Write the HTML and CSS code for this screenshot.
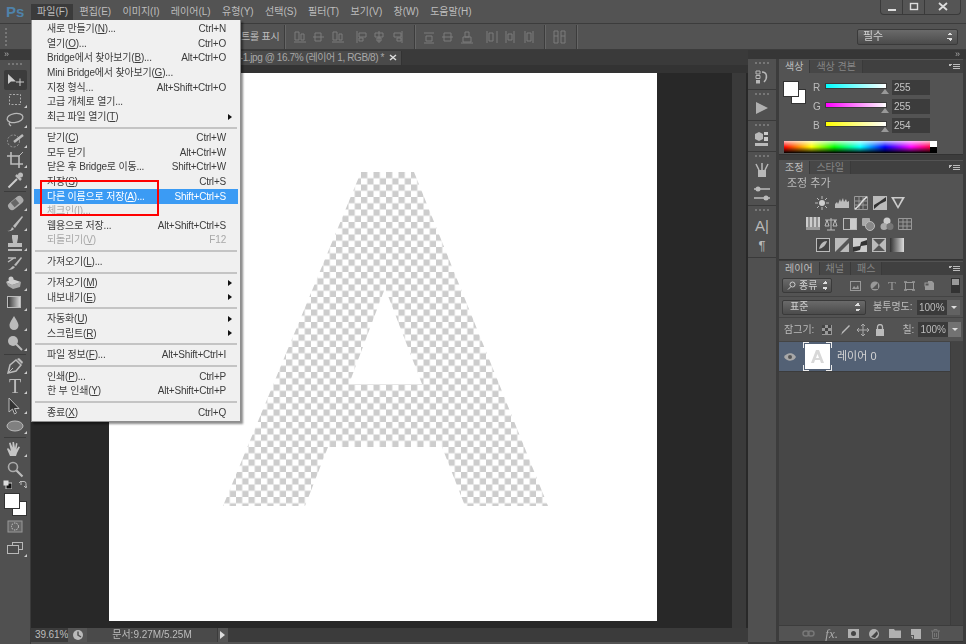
FILE: index.html
```html
<!DOCTYPE html>
<html lang="ko">
<head>
    <meta charset="UTF-8">
    <title>Photoshop - 다른 이름으로 저장</title>
    <link rel="stylesheet" href="styles.css">
</head>
<body>
<div class="app">

    <!-- 메뉴 막대 -->
    <header class="menubar">
        <span class="ps-logo">Ps</span>
        <nav class="menu-titles">
            <span class="menu-title active">파일(F)</span>
            <span class="menu-title">편집(E)</span>
            <span class="menu-title">이미지(I)</span>
            <span class="menu-title">레이어(L)</span>
            <span class="menu-title">유형(Y)</span>
            <span class="menu-title">선택(S)</span>
            <span class="menu-title">필터(T)</span>
            <span class="menu-title">보기(V)</span>
            <span class="menu-title">창(W)</span>
            <span class="menu-title">도움말(H)</span>
        </nav>
        <div class="win-buttons">
            <span class="win-btn min"><svg width="10" height="10"><rect x="1" y="7" width="8" height="2" fill="#ddd"/></svg></span>
            <span class="win-btn max"><svg width="10" height="10"><rect x="1.5" y="1.5" width="7" height="6" fill="none" stroke="#ddd" stroke-width="1.4"/></svg></span>
            <span class="win-btn close"><svg width="10" height="10"><path d="M1 1l8 7M9 1L1 8" stroke="#ddd" stroke-width="1.8"/></svg></span>
        </div>
    </header>

    <!-- 옵션 막대 -->
    <div class="optionsbar">
        <span class="opt-grip"></span>
        <span class="opt-label">트롤 표시</span>
        <span class="opt-sep"></span>
        <svg class="opt-icons" width="286" height="24" viewBox="0 -4 286 24" fill="none" stroke="#7d7d7d">
            <path d="M5 3h4v8H5zM11 5h3v6h-3zM4 13h12"/>
            <path d="M23 8h11M25 4h6v8h-6z"/>
            <path d="M43 3h4v8h-4zM49 5h3v6h-3zM42 13h12"/>
            <path d="M67 2v12M69 4h7v4h-7zM69 9h4v3h-4z"/>
            <path d="M89 2v12M85 4h8v4h-8zM87 9h4v3h-4z"/>
            <path d="M112 2v12M104 4h7v4h-7zM107 9h4v3h-4z"/>
            <path d="M124.500 -4v24" stroke="#3c3c3c"/>
            <path d="M125.500 -4v24" stroke="#666"/>
            <path d="M134 4h10M136 7h6v5h-6zM134 14h10"/>
            <path d="M152 8h11M154 4h7v8h-7z"/>
            <path d="M171 14h12M173 8h8v5h-8zM175 3h4v5h-4z"/>
            <path d="M197 2v12M207 2v12M199 4h4v8h-4z"/>
            <path d="M216 2v12M224 2v12M218 5h4v6h-4z"/>
            <path d="M235 2v12M243 2v12M237 4h4v8h-4z"/>
            <path d="M254.500 -4v24" stroke="#3c3c3c"/>
            <path d="M255.500 -4v24" stroke="#666"/>
            <path d="M264 2h4v12h-4zM271 2h4v12h-4zM264 7h4M271 7h4"/>
        </svg>
        <span class="opt-sep end"></span>
        <div class="select workspace"><span>필수</span><span class="updown"></span></div>
    </div>

    <div class="workspace-area">

        <!-- 도구 상자 -->
        <aside class="toolbar">
            <div class="collapse-strip"><span class="dbl-arrow">»</span></div>
            <div class="grip"></div>
            <div class="tool selected">
                <svg width="20" height="20" viewBox="0 0 20 20"><path d="M3 4v10l3-2.5h5z" fill="#ccc"/><path d="M11 12h8M15 8.500v7.500" stroke="#ccc" fill="none"/></svg>
            </div>
            <div class="tool fly">
                <svg width="20" height="20" viewBox="0 0 20 20"><rect x="4.500" y="4.500" width="11" height="10" fill="none" stroke="#aaa" stroke-dasharray="2 1.500"/></svg>
            </div>
            <div class="tool fly">
                <svg width="20" height="20" viewBox="0 0 20 20" fill="none" stroke="#b8b8b8" stroke-width="1.300"><ellipse cx="10" cy="8" rx="8" ry="4.500" transform="rotate(-10 10 8)"/><path d="M5 12c-2 2 0 3 1 4"/></svg>
            </div>
            <div class="tool fly">
                <svg width="20" height="20" viewBox="0 0 20 20" fill="none"><circle cx="8.500" cy="11" r="6" stroke="#999" stroke-dasharray="2 1.500"/><path d="M9 12L18 5" stroke="#bbb" stroke-width="2.500"/></svg>
            </div>
            <div class="tool fly">
                <svg width="20" height="20" viewBox="0 0 20 20" fill="none" stroke="#bbb" stroke-width="1.600"><path d="M6 2v12h12M2 6h12v12"/><path d="M14 6l4-4" stroke-width="1"/></svg>
            </div>
            <div class="tool fly">
                <svg width="20" height="20" viewBox="0 0 20 20" fill="none"><path d="M3.500 17.500L12 9" stroke="#ccc" stroke-width="2"/><path d="M11 5l5 5" stroke="#bbb" stroke-width="2.500"/><circle cx="15.500" cy="5" r="2.500" fill="#bbb"/></svg>
            </div>
            <div class="tool-sep"></div>
            <div class="tool fly">
                <svg width="20" height="20" viewBox="0 0 20 20"><rect x="2" y="6.500" width="17" height="8" rx="3.500" fill="#aaa" transform="rotate(-40 10 10)"/><rect x="7" y="7" width="6" height="6" fill="#666" transform="rotate(-40 10 10)"/></svg>
            </div>
            <div class="tool fly">
                <svg width="20" height="20" viewBox="0 0 20 20"><path d="M2 18c3 0 4-1 5-4l2 2c-1 1.500-4 2.500-7 2zM8 13L17 3l1 1-8 11z" fill="#bbb"/></svg>
            </div>
            <div class="tool fly">
                <svg width="20" height="20" viewBox="0 0 20 20"><path d="M7 2h6v3l-1 5h5v4H3v-4h5L7 5zM3 16h14v2H3z" fill="#bbb"/></svg>
            </div>
            <div class="tool fly">
                <svg width="20" height="20" viewBox="0 0 20 20"><path d="M3 17c3-1 3-3 5-4l2 1c-1 2-4 3-7 3zM9 12l7-8 1 1-6 8z" fill="#bbb"/><path d="M3 5h8M3 9l6-4" stroke="#bbb" stroke-width="1.500" fill="none"/></svg>
            </div>
            <div class="tool fly">
                <svg width="20" height="20" viewBox="0 0 20 20"><path d="M1 9l6 3 9-3-1 5-7 2-5-3z" fill="#aaa"/><path d="M7 6l9 3-9 3-6-3z" fill="#d0d0d0"/><circle cx="6" cy="6" r="2.500" fill="#ccc"/></svg>
            </div>
            <div class="tool fly">
                <svg width="20" height="20" viewBox="0 0 20 20"><defs><linearGradient id="grad-tool"><stop offset="0" stop-color="#333"/><stop offset="1" stop-color="#ddd"/></linearGradient></defs><rect x="2.500" y="3.500" width="13" height="11" fill="url(#grad-tool)" stroke="#bbb"/></svg>
            </div>
            <div class="tool fly">
                <svg width="20" height="20" viewBox="0 0 20 20"><path d="M9 3C6 8 4.500 10 4.500 12.500a4.500 4.500 0 0 0 9 0C13.500 10 12 8 9 3z" fill="#bbb"/></svg>
            </div>
            <div class="tool fly">
                <svg width="20" height="20" viewBox="0 0 20 20" fill="none"><circle cx="8" cy="8" r="5" fill="#bbb"/><path d="M11 11l6 6" stroke="#bbb" stroke-width="2"/></svg>
            </div>
            <div class="tool-sep"></div>
            <div class="tool fly">
                <svg width="20" height="20" viewBox="0 0 20 20"><path d="M3 17l2-8 6-5 5 5-5 6z" fill="none" stroke="#bbb" stroke-width="1.500"/><path d="M3 17l5-5" stroke="#bbb"/><path d="M12 3l2-1 4 4-1 2z" fill="#bbb"/></svg>
            </div>
            <div class="tool fly"><span class="type-t">T</span></div>
            <div class="tool fly">
                <svg width="20" height="20" viewBox="0 0 20 20"><path d="M4 2v14l3.500-3 2 5 2-1-2-4.500H14z" fill="#333" stroke="#bbb"/></svg>
            </div>
            <div class="tool fly">
                <svg width="20" height="20" viewBox="0 0 20 20"><ellipse cx="10" cy="10" rx="8" ry="5" fill="#808080" stroke="#bbb"/></svg>
            </div>
            <div class="tool-sep"></div>
            <div class="tool fly">
                <svg width="20" height="20" viewBox="0 0 20 20"><path d="M5 17L2 10l1-1 3 3-2-8 1.500-.5 2 5V3h1.500l1 6 1-5 1.500.5-1 6 2-3 1.500.5-3 6-1 3z" fill="#c4c4c4"/></svg>
            </div>
            <div class="tool">
                <svg width="20" height="20" viewBox="0 0 20 20" fill="none"><circle cx="8" cy="8" r="4.500" stroke="#aaa" stroke-width="1.600"/><path d="M11.500 11.500l6 6" stroke="#bbb" stroke-width="2.200"/></svg>
            </div>
            <div class="color-mini">
                <svg width="9" height="9"><rect x="3" y="3" width="6" height="6" fill="#111" stroke="#ccc"/><rect x=".5" y=".5" width="5" height="5" fill="#ddd"/></svg>
                <svg width="9" height="9" fill="none" stroke="#bbb"><path d="M1 3l2-2v4M3 1.500h3a2 2 0 0 1 2 2V7M6 6l2 2 1-2"/></svg>
            </div>
            <div class="fg-bg">
                <span class="swatch-bg"></span>
                <span class="swatch-fg"></span>
            </div>
            <div class="tool quick-mask">
                <svg width="20" height="20" viewBox="0 0 20 20" fill="none"><rect x="3" y="4" width="14" height="11" fill="#666" stroke="#999"/><circle cx="10" cy="9.500" r="3.500" stroke="#ccc" stroke-dasharray="1.500 1"/></svg>
            </div>
            <div class="tool fly screen-mode">
                <svg width="20" height="20" viewBox="0 0 20 20" fill="none" stroke="#b8b8b8"><rect x="7.500" y="3.500" width="10" height="7"/><rect x="2.500" y="6.500" width="11" height="8" fill="#4c4c4c"/></svg>
            </div>
        </aside>

        <!-- 문서 영역 -->
        <main class="docarea">
            <div class="tabbar">
                <div class="doc-tab">
                    <span>-1.jpg @ 16.7% (레이어 1, RGB/8) *</span>
                    <svg width="8" height="8"><path d="M1 1l6 5M7 1L1 6" stroke="#ddd" stroke-width="1.500"/></svg>
                </div>
            </div>
            <div class="tab-shade"></div>
            <div class="doc-view">
                <div class="canvas">
                    <svg class="letter" width="548" height="548" viewBox="0 0 548 548">
                        <defs>
                            <pattern id="transparent-grid" x="252" y="99" width="12.500" height="12.500" patternUnits="userSpaceOnUse">
                                <rect width="12.500" height="12.500" fill="#fff"/>
                                <rect width="6.250" height="6.250" fill="#cdcdcd"/>
                                <rect x="6.250" y="6.250" width="6.250" height="6.250" fill="#cdcdcd"/>
                            </pattern>
                        </defs>
                        <path fill="url(#transparent-grid)" fill-rule="evenodd" d="M252 99H305L439 433H356L333 374H219L196 433H114ZM276 215L240 311H313Z"/>
                    </svg>
                </div>
                <div class="v-scroll"></div>
            </div>
            <footer class="statusbar">
                <span class="zoom-field">39.61%</span>
                <span class="status-icon"><svg width="12" height="12"><circle cx="6" cy="6" r="5" fill="#bbb"/><path d="M6 2.500V6l3 2" stroke="#555" fill="none" stroke-width="1.500"/></svg></span>
                <span class="doc-size">문서:9.27M/5.25M</span>
                <span class="status-arrow"></span>
            </footer>
        </main>

        <!-- 패널 아이콘 도크 -->
        <div class="dock">
            <div class="dock-strip"></div>
            <div class="dock-group">
                <svg width="16" height="16" viewBox="0 0 16 16"><path d="M2 2h4v3H2zM2 6.500h4v3H2z" fill="none" stroke="#b8b8b8"/><rect x="2" y="11" width="4" height="3.500" fill="#b8b8b8"/><path d="M8 3c5 0 6 6 2 10" fill="none" stroke="#b8b8b8" stroke-width="1.500"/></svg>
            </div>
            <div class="dock-group">
                <svg width="16" height="16" viewBox="0 0 16 16"><path d="M2 2l12 6-12 6z" fill="#b0b0b0"/></svg>
            </div>
            <div class="dock-group">
                <svg width="16" height="16" viewBox="0 0 16 16"><path d="M1 3l4-2 4 2v5l-4 2-4-2z" fill="#b8b8b8"/><rect x="10" y="1" width="4" height="3" fill="#ccc"/><rect x="10" y="6" width="4" height="4" fill="#ccc"/><rect x="1" y="12" width="13" height="3" fill="#bbb"/></svg>
            </div>
            <div class="dock-group tall">
                <svg width="16" height="16" viewBox="0 0 16 16"><path d="M4 8h8v7H4z" fill="#b8b8b8"/><path d="M5 8L2 2M8 8V1M11 8l3-6" stroke="#b8b8b8" stroke-width="1.500"/></svg>
                <svg width="18" height="16" viewBox="0 0 18 16"><path d="M1 3h16M1 12h16" stroke="#bbb" stroke-width="1.500"/><circle cx="5" cy="3" r="2.500" fill="#bbb"/><circle cx="13" cy="12" r="2.500" fill="#bbb"/></svg>
            </div>
            <div class="dock-group tall text-tools">
                <span class="dock-a">A|</span>
                <span class="dock-para">¶</span>
            </div>
            <div class="dock-rest"></div>
        </div>

        <!-- 패널 -->
        <div class="panels">
            <div class="dock-strip right"><span class="dbl-arrow">»</span></div>

            <section class="panel color-panel">
                <div class="tabs">
                    <span class="tab active">색상</span>
                    <span class="tab">색상 견본</span>
                    <span class="panel-menu"></span>
                </div>
                <div class="color-body">
                    <div class="fg-bg small">
                        <span class="swatch-bg"></span>
                        <span class="swatch-fg"></span>
                    </div>
                    <div class="sliders">
                        <div class="slider-row"><label>R</label><span class="ramp red"></span><span class="field">255</span></div>
                        <div class="slider-row"><label>G</label><span class="ramp green"></span><span class="field">255</span></div>
                        <div class="slider-row"><label>B</label><span class="ramp blue"></span><span class="field">254</span></div>
                    </div>
                </div>
                <div class="spectrum"><span class="spec-ends"></span></div>
            </section>

            <section class="panel adjust-panel">
                <div class="tabs">
                    <span class="tab active">조정</span>
                    <span class="tab">스타일</span>
                    <span class="panel-menu"></span>
                </div>
                <p class="adjust-title">조정 추가</p>
                <div class="adjust-row">
                    <svg width="14" height="14" viewBox="0 0 14 14"><circle cx="7" cy="7" r="3" fill="#ccc"/><path d="M7 0v3M7 11v3M0 7h3M11 7h3M2 2l2 2M10 10l2 2M12 2l-2 2M4 10l-2 2" stroke="#bbb"/></svg>
                    <svg width="16" height="14" viewBox="0 0 16 14"><path d="M1 12V8l2-2 1 2 2-5 1 3 2-4 1 4 2-3 1 3 2-1v7z" fill="#bbb"/></svg>
                    <svg width="14" height="14" viewBox="0 0 14 14" fill="none" stroke="#999"><path d="M.5.500h13v13H.5zM.5 5h13M.5 9h13M5 .5v13M9 .5v13"/><path d="M1 13C5 11 9 3 13 1" stroke="#ddd" stroke-width="1.500"/></svg>
                    <svg width="14" height="14" viewBox="0 0 14 14"><rect width="14" height="14" fill="#bbb"/><path d="M1 13V9l5-3 7-5v4l-6 3z" fill="#333"/></svg>
                    <svg width="14" height="14" viewBox="0 0 14 14"><path d="M0 1h14L7 13z" fill="#ccc"/><path d="M3 2.500h8L7 10z" fill="#555"/></svg>
                </div>
                <div class="adjust-row wide">
                    <svg width="14" height="14" viewBox="0 0 14 14"><rect width="14" height="10" fill="#ccc"/><path d="M3 0v10M7 0v10M11 0v10" stroke="#555"/><rect y="10" width="14" height="3" fill="#999"/></svg>
                    <svg width="14" height="14" viewBox="0 0 14 14" fill="none" stroke="#bbb"><path d="M7 1v12M3 13h8M1 3h12M3 3L1 9h4zM11 3L9 9h4z"/></svg>
                    <svg width="14" height="14" viewBox="0 0 14 14"><rect x=".5" y="1.500" width="13" height="11" fill="#555" stroke="#bbb"/><rect x="7" y="2" width="6" height="10" fill="#ccc"/></svg>
                    <svg width="14" height="14" viewBox="0 0 14 14"><rect x="1" y="1" width="8" height="8" rx="1" fill="#aaa"/><circle cx="9" cy="9" r="4.500" fill="#888" stroke="#bbb"/></svg>
                    <svg width="14" height="14" viewBox="0 0 14 14"><circle cx="7" cy="4" r="3.500" fill="#ccc"/><circle cx="4" cy="9.500" r="3.500" fill="#aaa"/><circle cx="10" cy="9.500" r="3.500" fill="#777"/></svg>
                    <svg width="14" height="14" viewBox="0 0 14 14" fill="none" stroke="#999"><path d="M.5 1.500h13v11H.5zM.5 5h13M.5 9h13M5 1.500v11M9 1.500v11"/></svg>
                </div>
                <div class="adjust-row">
                    <svg width="14" height="14" viewBox="0 0 14 14"><rect x=".5" y=".5" width="13" height="13" fill="#444" stroke="#bbb"/><path d="M3 11c1-5 4-8 8-8-1 4-4 7-8 8z" fill="#bbb"/></svg>
                    <svg width="14" height="14" viewBox="0 0 14 14"><rect width="14" height="14" fill="#bbb"/><path d="M0 14L14 0v5L5 14z" fill="#555"/></svg>
                    <svg width="14" height="14" viewBox="0 0 14 14"><rect width="14" height="14" fill="#ccc"/><path d="M0 14V9l7-1 1-4 6-2v5l-6 1-1 4z" fill="#333"/></svg>
                    <svg width="14" height="14" viewBox="0 0 14 14"><rect width="14" height="14" fill="#bbb"/><path d="M1 1h12L7 7zM1 13h12L7 7z" fill="#555"/></svg>
                    <svg width="14" height="14" viewBox="0 0 14 14"><defs><linearGradient id="grad-map"><stop offset="0" stop-color="#333"/><stop offset="1" stop-color="#ddd"/></linearGradient></defs><rect width="14" height="14" fill="url(#grad-map)"/></svg>
                </div>
            </section>

            <section class="panel layers-panel">
                <div class="tabs">
                    <span class="tab active">레이어</span>
                    <span class="tab">채널</span>
                    <span class="tab">패스</span>
                    <span class="panel-menu"></span>
                </div>
                <div class="layer-row filter-row">
                    <div class="select kind">
                        <svg width="9" height="9" fill="none" stroke="#ccc"><circle cx="5.500" cy="3.500" r="2.500"/><path d="M4 5.500L1 8.500"/></svg>
                        <span>종류</span><span class="updown"></span>
                    </div>
                    <div class="filter-icons">
                        <svg width="11" height="10"><rect x=".5" y=".5" width="10" height="9" fill="none" stroke="#999"/><path d="M2 8l2-3 2 2 2-3 1 4z" fill="#999"/></svg>
                        <svg width="10" height="10"><circle cx="5" cy="5" r="4.500" fill="#999"/><path d="M2 8L8 2v6z" fill="#555"/></svg>
                        <span class="filter-t">T</span>
                        <svg width="11" height="10" fill="none" stroke="#999"><path d="M1.500 1.500h8v7h-8z"/><path d="M0 1h3M8 1h3M0 9h3M8 9h3" stroke-width="1.500"/></svg>
                        <svg width="11" height="11"><path d="M4 1h4l2 2v7H1V5h3z" fill="#999"/><rect x="1" y="3" width="4" height="3" fill="#555" stroke="#999"/></svg>
                    </div>
                    <span class="filter-toggle"></span>
                </div>
                <div class="layer-row blend-row">
                    <div class="select blend"><span>표준</span><span class="updown"></span></div>
                    <label>불투명도:</label>
                    <span class="percent">100%</span><span class="percent-btn"></span>
                </div>
                <div class="layer-row lock-row">
                    <label>잠그기:</label>
                    <div class="lock-icons">
                        <svg width="10" height="10"><rect width="10" height="10" fill="#999"/><path d="M0 0h3v3H0zM6 0h3v3H6zM3 3h3v3H3zM0 6h3v3H0zM6 6h3v3H6z" fill="#444"/></svg>
                        <svg width="13" height="12"><path d="M1 11c2 0 3-1 3-3l7-7 1 1-7 7c-1 1-2 2-4 2z" fill="#bbb"/></svg>
                        <svg width="12" height="12" stroke="#aaa" fill="none"><path d="M6 0v12M0 6h12M4 2l2-2 2 2M4 10l2 2 2-2M2 4L0 6l2 2M10 4l2 2-2 2"/></svg>
                        <svg width="10" height="12"><rect x="1" y="5" width="8" height="7" fill="#bbb"/><path d="M2.500 5V3a2.500 2.500 0 0 1 5 0v2" fill="none" stroke="#bbb" stroke-width="1.300"/></svg>
                    </div>
                    <label class="fill-label">칠:</label>
                    <span class="percent">100%</span><span class="percent-btn light"></span>
                </div>
                <div class="layer-list">
                    <div class="layer-rows">
                        <div class="layer-item">
                            <svg class="eye" width="12" height="8" viewBox="0 0 12 8"><path d="M0 4c3-5 9-5 12 0-3 5-9 5-12 0z" fill="#a8a8a8"/><circle cx="6" cy="4" r="2" fill="#555"/></svg>
                            <div class="thumb">
                                <svg width="25" height="25" viewBox="0 0 25 25"><path d="M11 6h3l5 13h-3l-1-3h-5l-1 3H6zM12.500 10l-1.500 4h3z" fill="#d8d8d8" fill-rule="evenodd"/></svg>
                            </div>
                            <span class="layer-name">레이어 0</span>
                        </div>
                    </div>
                    <div class="layer-gutter"></div>
                </div>
                <div class="panel-footer">
                    <svg width="13" height="7" fill="none" stroke="#777" stroke-width="1.500"><rect x="1" y="1" width="6" height="5" rx="2.500"/><rect x="6" y="1" width="6" height="5" rx="2.500"/></svg>
                    <span class="fx">fx.</span>
                    <svg width="11" height="9"><rect width="11" height="9" fill="#b0b0b0"/><circle cx="5.500" cy="4.500" r="2.500" fill="#444"/></svg>
                    <svg width="10" height="10"><circle cx="5" cy="5" r="5" fill="#b0b0b0"/><path d="M2 8L8 2l1 3-3 4z" fill="#444"/></svg>
                    <svg width="12" height="9"><path d="M0 0h5l1 1.500h6V9H0z" fill="#b0b0b0"/></svg>
                    <svg width="10" height="10"><path d="M0 0h10v10H3V6H0z" fill="#b0b0b0"/><path d="M0 7h2v3z" fill="#b0b0b0"/></svg>
                    <svg width="9" height="10" fill="none" stroke="#777"><path d="M0 2h9M3 2V.5h3V2M1.500 2v7.500h6V2M3.500 4v4M5.500 4v4"/></svg>
                </div>
            </section>
        </div>
    </div>
</div>

<!-- 파일 메뉴 -->
<div class="file-menu">
    <div class="menu-group">
        <div class="mi"><span>새로 만들기(<u>N</u>)...</span><span>Ctrl+N</span></div>
        <div class="mi"><span>열기(<u>O</u>)...</span><span>Ctrl+O</span></div>
        <div class="mi"><span>Bridge에서 찾아보기(<u>B</u>)...</span><span>Alt+Ctrl+O</span></div>
        <div class="mi"><span>Mini Bridge에서 찾아보기(<u>G</u>)...</span></div>
        <div class="mi"><span>지정 형식...</span><span>Alt+Shift+Ctrl+O</span></div>
        <div class="mi"><span>고급 개체로 열기...</span></div>
        <div class="mi sub"><span>최근 파일 열기(<u>T</u>)</span></div>
    </div>
    <div class="menu-group">
        <div class="mi"><span>닫기(<u>C</u>)</span><span>Ctrl+W</span></div>
        <div class="mi"><span>모두 닫기</span><span>Alt+Ctrl+W</span></div>
        <div class="mi"><span>닫은 후 Bridge로 이동...</span><span>Shift+Ctrl+W</span></div>
        <div class="mi"><span>저장(<u>S</u>)</span><span>Ctrl+S</span></div>
        <div class="mi hot"><span>다른 이름으로 저장(<u>A</u>)...</span><span>Shift+Ctrl+S</span></div>
        <div class="mi off"><span>체크인(<u>I</u>)...</span></div>
        <div class="mi"><span>웹용으로 저장...</span><span>Alt+Shift+Ctrl+S</span></div>
        <div class="mi off"><span>되돌리기(<u>V</u>)</span><span>F12</span></div>
    </div>
    <div class="menu-group">
        <div class="mi"><span>가져오기(<u>L</u>)...</span></div>
    </div>
    <div class="menu-group">
        <div class="mi sub"><span>가져오기(<u>M</u>)</span></div>
        <div class="mi sub"><span>내보내기(<u>E</u>)</span></div>
    </div>
    <div class="menu-group">
        <div class="mi sub"><span>자동화(<u>U</u>)</span></div>
        <div class="mi sub"><span>스크립트(<u>R</u>)</span></div>
    </div>
    <div class="menu-group">
        <div class="mi"><span>파일 정보(<u>F</u>)...</span><span>Alt+Shift+Ctrl+I</span></div>
    </div>
    <div class="menu-group">
        <div class="mi"><span>인쇄(<u>P</u>)...</span><span>Ctrl+P</span></div>
        <div class="mi"><span>한 부 인쇄(<u>Y</u>)</span><span>Alt+Shift+Ctrl+P</span></div>
    </div>
    <div class="menu-group">
        <div class="mi"><span>종료(<u>X</u>)</span><span>Ctrl+Q</span></div>
    </div>
</div>

<!-- 빨간 강조 상자 -->
<div class="red-box"></div>

</body>
</html>
```

FILE: styles.css
```css
/* 전체 */
html, body {
    margin: 0;
    padding: 0;
}
body {
    position: relative;
    width: 966px;
    height: 644px;
    overflow: hidden;
    background: #535353;
    color: #bdbdbd;
    font-family: "Liberation Sans", "Noto Sans CJK KR", sans-serif;
    font-size: 10px;
    line-height: 1;
    filter: blur(.35px);
}
.app {
    display: flex;
    flex-direction: column;
    height: 100%;
}

/* 메뉴 막대 */
.menubar {
    display: flex;
    align-items: flex-start;
    height: 23px;
    background: #535353;
    border-bottom: 1px solid #3c3c3c;
}
.ps-logo {
    width: 31px;
    padding: 4px 0 0 6px;
    box-sizing: border-box;
    color: #4f82aa;
    font-family: "Liberation Sans", sans-serif;
    font-size: 15px;
    font-weight: bold;
}
.menu-titles {
    display: flex;
    padding-top: 4px;
}
.menu-title {
    height: 16px;
    padding: 3px 5.300px 0 6px;
    box-sizing: border-box;
    white-space: nowrap;
}
.menu-title.active {
    background: #3b3b3b;
}
.win-buttons {
    display: flex;
    margin-left: auto;
    margin-right: 5px;
    height: 14px;
    background: #555;
    border: 1px solid #3a3a3a;
    border-top: 0;
    border-radius: 0 0 4px 4px;
}
.win-btn {
    display: flex;
    align-items: center;
    justify-content: center;
    border-right: 1px solid #3a3a3a;
}
.win-btn.min, .win-btn.max { width: 21px; }
.win-btn.close { width: 35px; border-right: 0; }

/* 옵션 막대 */
.optionsbar {
    display: flex;
    align-items: center;
    height: 26px;
    background: #535353;
    border-bottom: 1px solid #3c3c3c;
    box-sizing: border-box;
    padding-right: 8px;
}
.opt-grip {
    width: 2px;
    height: 18px;
    margin-left: 5px;
    border-left: 2px dotted #777;
}
.opt-label {
    margin-left: 232px;
    width: 34px;
    letter-spacing: -.2px;
    white-space: nowrap;
}
.opt-sep {
    width: 1px;
    height: 24px;
    margin-left: 9px;
    background: #3c3c3c;
    border-right: 1px solid #666;
}
.opt-icons {
    margin-left: 4px;
    flex-shrink: 0;
}
.opt-sep.end {
    margin-left: 0;
}
.select {
    display: flex;
    align-items: center;
    box-sizing: border-box;
    background: linear-gradient(#6a6a6a, #4b4b4b);
    border: 1px solid #3a3a3a;
    border-radius: 2px;
    color: #d0d0d0;
}
.select.workspace {
    width: 101px;
    height: 16px;
    margin-left: auto;
    padding: 0 5px;
    font-size: 11px;
}
.updown {
    position: relative;
    width: 5px;
    height: 9px;
    margin-left: auto;
    background:
        linear-gradient(135deg, transparent 50%, #ddd 50%) 0 0 / 3px 3px no-repeat,
        linear-gradient(225deg, transparent 50%, #ddd 50%) 2.5px 0 / 3px 3px no-repeat,
        linear-gradient(45deg, transparent 50%, #ddd 50%) 0 6px / 3px 3px no-repeat,
        linear-gradient(315deg, transparent 50%, #ddd 50%) 2.5px 6px / 3px 3px no-repeat;
}

/* 본문 배치 */
.workspace-area {
    display: flex;
    flex: 1;
    min-height: 0;
}

/* 도구 상자 */
.toolbar {
    display: flex;
    flex-direction: column;
    align-items: center;
    width: 31px;
    flex-shrink: 0;
    background: #505050;
    border-right: 1px solid #3a3a3a;
    box-sizing: border-box;
}
.collapse-strip {
    align-self: stretch;
    height: 10px;
    background: #3a3a3a;
    padding-left: 4px;
}
.dbl-arrow {
    display: block;
    color: #aaa;
    font-size: 9px;
    line-height: 8px;
}
.grip {
    width: 14px;
    height: 2px;
    margin: 3px 0 5px;
    border-top: 2px dotted #777;
    box-sizing: border-box;
}
.tool {
    position: relative;
    display: flex;
    align-items: center;
    justify-content: center;
    width: 23px;
    height: 20px;
}
.tool.selected {
    background: #3c3c3c;
    border-radius: 2px;
}
.tool.fly::after {
    content: "";
    position: absolute;
    right: 0;
    bottom: 2px;
    border-left: 3px solid transparent;
    border-bottom: 3px solid #ccc;
}
.tool-sep {
    width: 22px;
    height: 1px;
    margin: 1px 0;
    background: #3c3c3c;
    flex-shrink: 0;
}
.type-t {
    font-family: "Liberation Serif", serif;
    font-size: 20px;
    color: #bbb;
}
.color-mini {
    display: flex;
    justify-content: space-between;
    width: 24px;
    margin-top: 1px;
}
.fg-bg {
    position: relative;
    width: 23px;
    height: 23px;
    margin-top: 4px;
}
.fg-bg span {
    position: absolute;
    display: block;
    background: #fff;
    border: 1px solid #333;
    box-sizing: border-box;
}
.swatch-fg { left: 0; top: 0; width: 16px; height: 16px; }
.swatch-bg { left: 8px; top: 8px; width: 15px; height: 15px; }
.quick-mask { margin-top: 1px; }
.screen-mode { margin-top: 2px; }

/* 문서 영역 */
.docarea {
    display: flex;
    flex-direction: column;
    flex: 1;
    min-width: 0;
    background: #282828;
}
.tabbar {
    height: 15px;
    flex-shrink: 0;
    background: #3a3a3a;
    display: flex;
    align-items: flex-end;
    padding-left: 78px;
}
.doc-tab {
    display: flex;
    align-items: center;
    justify-content: flex-end;
    gap: 5px;
    width: 293px;
    height: 14px;
    box-sizing: border-box;
    padding-right: 4px;
    background: #4a4a4a;
    border-right: 1px solid #333;
    color: #a8a8a8;
    letter-spacing: -.4px;
    white-space: nowrap;
}
.tab-shade {
    height: 8px;
    flex-shrink: 0;
    background: #333;
}
.doc-view {
    display: flex;
    flex: 1;
    min-height: 0;
    padding-left: 78px;
    overflow: hidden;
}
.canvas {
    width: 548px;
    height: 548px;
    flex-shrink: 0;
    background: #fff;
}
.letter {
    display: block;
}
.v-scroll {
    width: 14px;
    margin-left: auto;
    margin-right: 2px;
    background: #3a3a3a;
}
.statusbar {
    display: flex;
    align-items: center;
    flex-shrink: 0;
    background: #3b3b3b;
    border-bottom: 2px solid #535353;
    padding-left: 4px;
    height: 14px;
    color: #bdbdbd;
}
.zoom-field {
    width: 33px;
    font-family: "Liberation Sans", sans-serif;
    font-size: 10px;
    letter-spacing: -.1px;
}
.status-icon {
    display: flex;
    align-items: center;
    justify-content: center;
    width: 19px;
    height: 14px;
    background: #555;
}
.doc-size {
    width: 130px;
    height: 14px;
    line-height: 14px;
    text-align: center;
    background: #4a4a4a;
}
.status-arrow {
    width: 10px;
    height: 14px;
    margin-left: 1px;
    background: #555;
    position: relative;
}
.status-arrow::after {
    content: "";
    position: absolute;
    left: 2px;
    top: 3px;
    border-left: 5px solid #ddd;
    border-top: 4px solid transparent;
    border-bottom: 4px solid transparent;
}

/* 도크 */
.dock {
    display: flex;
    flex-direction: column;
    width: 31px;
    flex-shrink: 0;
    box-sizing: border-box;
    background: #3c3c3c;
    padding-right: 3px;
    padding-bottom: 2px;
}
.dock-strip {
    height: 9px;
    margin-right: -3px;
    background: #363636;
    flex-shrink: 0;
}
.dock-group {
    display: flex;
    flex-direction: column;
    align-items: center;
    justify-content: center;
    height: 31px;
    box-sizing: border-box;
    padding-top: 6px;
    background: #505050;
    border-bottom: 1px solid #3a3a3a;
    position: relative;
    flex-shrink: 0;
}
.dock-group::before {
    content: "";
    position: absolute;
    top: 3px;
    left: 7px;
    width: 14px;
    border-top: 2px dotted #777;
}
.dock-group.tall {
    height: 54px;
    gap: 8px;
}
.dock-group.text-tools {
    height: 52px;
    gap: 6px;
}
.dock-a {
    font-family: "Liberation Sans", sans-serif;
    font-size: 15px;
    color: #b8b8b8;
}
.dock-para {
    font-family: "Liberation Sans", sans-serif;
    font-size: 13px;
    color: #b8b8b8;
}
.dock-rest {
    flex: 1;
    background: #505050;
}

/* 패널 */
.panels {
    display: flex;
    flex-direction: column;
    width: 187px;
    flex-shrink: 0;
    background: #3c3c3c;
    padding-right: 3px;
    padding-bottom: 2px;
    box-sizing: border-box;
}
.dock-strip.right {
    display: flex;
    justify-content: flex-end;
    padding-right: 6px;
}
.panel {
    background: #535353;
    border-bottom: 1px solid #333;
    flex-shrink: 0;
}
.tabs {
    display: flex;
    align-items: flex-end;
    height: 13px;
    background: #404040;
    position: relative;
    margin-top: 1px;
}
.tab {
    height: 13px;
    line-height: 13px;
    padding: 0 6px;
    background: #474747;
    border-right: 1px solid #3a3a3a;
    color: #858585;
    white-space: nowrap;
}
.tab.active {
    background: #535353;
    color: #bdbdbd;
}
.panel-menu {
    position: absolute;
    right: 3px;
    top: 4px;
    width: 11px;
    height: 5px;
    background:
        linear-gradient(#bbb, #bbb) 4px 0 / 7px 1px no-repeat,
        linear-gradient(#bbb, #bbb) 4px 2px / 7px 1px no-repeat,
        linear-gradient(#bbb, #bbb) 4px 4px / 7px 1px no-repeat,
        linear-gradient(135deg, #bbb 50%, transparent 50%) 0 0 / 3px 3px no-repeat;
}

/* 색상 패널 */
.color-panel {
    height: 95px;
}
.color-body {
    display: flex;
    padding: 7px 0 0 4px;
}
.fg-bg.small {
    width: 23px;
    height: 24px;
    margin-top: 1px;
}
.sliders {
    margin-left: 7px;
    display: flex;
    flex-direction: column;
    gap: 4px;
}
.slider-row {
    display: flex;
    align-items: center;
    height: 15px;
}
.slider-row label {
    width: 12px;
    font-size: 10px;
}
.ramp {
    position: relative;
    width: 60px;
    height: 4px;
    margin-right: 5px;
    margin-top: -4px;
    border: 1px solid #3a3a3a;
    box-sizing: content-box;
}
.ramp::after {
    content: "";
    position: absolute;
    right: -3px;
    top: 5px;
    border-left: 4px solid transparent;
    border-right: 4px solid transparent;
    border-bottom: 5px solid #999;
}
.ramp.red { background: linear-gradient(to right, #0ff, #fff); }
.ramp.green { background: linear-gradient(to right, #f0f, #fff); }
.ramp.blue { background: linear-gradient(to right, #ff0, #fff); }
.field {
    width: 38px;
    height: 15px;
    line-height: 16px;
    padding-left: 2px;
    box-sizing: border-box;
    background: #3c3c3c;
    color: #c4c4c4;
}
.spectrum {
    position: relative;
    width: 153px;
    height: 12px;
    margin: 8px 0 0 5px;
    background:
        linear-gradient(to bottom, rgba(255,255,255,.75), transparent 50%, #000),
        linear-gradient(to right, #f00, #ff0 18%, #0f0 33%, #0ff 50%, #00f 66%, #f0f 83%, #f00 100%);
}
.spec-ends {
    position: absolute;
    right: 0;
    top: 0;
    width: 7px;
    height: 12px;
    background: linear-gradient(#fff 50%, #000 50%);
}

/* 조정 패널 */
.adjust-panel {
    height: 99px;
    margin-top: 5px;
}
.adjust-title {
    margin: 4px 0 7px 8px;
    font-size: 11px;
}
.adjust-row {
    display: flex;
    justify-content: center;
    align-items: center;
    gap: 4.500px;
    height: 14px;
    margin-bottom: 7px;
    padding-right: 22px;
}
.adjust-row.wide {
    padding-right: 24px;
}

/* 레이어 패널 */
.layers-panel {
    display: flex;
    flex-direction: column;
    flex: 1;
    min-height: 0;
    margin-top: 1px;
}
.layer-row {
    display: flex;
    align-items: center;
    height: 22px;
    box-sizing: border-box;
    border-bottom: 1px solid #444;
    padding-left: 3px;
}
.select.kind {
    width: 50px;
    height: 15px;
    padding: 0 4px;
    gap: 3px;
}
.filter-icons {
    display: flex;
    align-items: center;
    gap: 8.500px;
    margin-left: 18px;
}
.filter-t {
    font-family: "Liberation Serif", serif;
    font-size: 13px;
    color: #999;
}
.filter-toggle {
    width: 7px;
    height: 13px;
    margin-left: 16px;
    background: linear-gradient(#999 50%, #333 50%);
    border: 1px solid #333;
}
.blend-row {
    height: 21px;
}
.select.blend {
    width: 84px;
    height: 15px;
    padding: 0 5px 0 7px;
}
.blend-row label {
    margin-left: 7px;
    width: 44px;
    white-space: nowrap;
}
.percent {
    width: 30px;
    height: 15px;
    line-height: 16px;
    box-sizing: border-box;
    padding-left: 2px;
    background: #3a3a3a;
    font-size: 10px;
}
.percent-btn {
    position: relative;
    width: 13px;
    height: 15px;
    background: #626262;
}
.percent-btn.light { background: #727272; }
.percent-btn::after {
    content: "";
    position: absolute;
    left: 4px;
    top: 6px;
    border-top: 3px solid #ddd;
    border-left: 3px solid transparent;
    border-right: 3px solid transparent;
}
.lock-row {
    padding-left: 5px;
    height: 24px;
}
.lock-row label { white-space: nowrap; }
.lock-icons {
    display: flex;
    align-items: center;
    gap: 6px;
    margin-left: 8px;
    width: 63px;
}
.fill-label {
    margin-left: 17px;
    width: 16px;
}
.layer-list {
    display: flex;
    flex: 1;
    min-height: 0;
    background: #474747;
}
.layer-rows {
    flex: 1;
}
.layer-gutter {
    width: 12px;
    background: #434343;
    border-left: 1px solid #3c3c3c;
}
.layer-item {
    display: flex;
    align-items: center;
    height: 30px;
    background: #536175;
    border-bottom: 1px solid #3c3c3c;
    box-sizing: border-box;
}
.eye {
    margin-left: 5px;
}
.thumb {
    position: relative;
    display: flex;
    width: 25px;
    height: 25px;
    margin: 0 1px 0 9px;
    background: #fff;
}
/* 선택된 레이어 썸네일의 모서리 표시 */
.thumb::before {
    content: "";
    position: absolute;
    inset: -2px;
    background:
        linear-gradient(#eee, #eee) 0 0 / 6px 1px no-repeat,
        linear-gradient(#eee, #eee) 0 0 / 1px 6px no-repeat,
        linear-gradient(#eee, #eee) 100% 0 / 6px 1px no-repeat,
        linear-gradient(#eee, #eee) 100% 0 / 1px 6px no-repeat,
        linear-gradient(#eee, #eee) 0 100% / 6px 1px no-repeat,
        linear-gradient(#eee, #eee) 0 100% / 1px 6px no-repeat,
        linear-gradient(#eee, #eee) 100% 100% / 6px 1px no-repeat,
        linear-gradient(#eee, #eee) 100% 100% / 1px 6px no-repeat;
}
.layer-name {
    margin-left: 6px;
    color: #d4d4d4;
    font-size: 11px;
}
.panel-footer {
    display: flex;
    align-items: center;
    justify-content: flex-end;
    gap: 10px;
    height: 15px;
    flex-shrink: 0;
    padding-right: 23px;
    background: #535353;
    border-top: 1px solid #3c3c3c;
}
.fx {
    font-family: "Liberation Serif", serif;
    font-style: italic;
    font-size: 13px;
    color: #aaa;
}

/* 파일 메뉴 */
.file-menu {
    position: absolute;
    left: 31px;
    top: 20px;
    width: 210px;
    box-sizing: border-box;
    padding: 2px 2px 1px;
    background: #f0f0f0;
    border: 1px solid #8e8e8e;
    border-top: 0;
    box-shadow: 2px 2px 2px rgba(0, 0, 0, .45);
    color: #3c3c3c;
    letter-spacing: -.2px;
}
.menu-group + .menu-group {
    margin-top: 6.800px;
    position: relative;
}
.menu-group + .menu-group::before {
    content: "";
    position: absolute;
    left: 1px;
    right: 1px;
    top: -4.400px;
    height: 2px;
    background: #c4c4c4;
}
.mi {
    position: relative;
    display: flex;
    justify-content: space-between;
    align-items: center;
    height: 14.600px;
    padding: 0 12px 0 13px;
    white-space: nowrap;
}
.mi u {
    text-underline-offset: 1px;
}
.mi.hot {
    background: #3b9bf4;
    color: #fff;
}
.mi.off {
    color: #a8a8a8;
}
.mi.sub::after {
    content: "";
    position: absolute;
    right: 6px;
    top: 4px;
    border-left: 4px solid #111;
    border-top: 3px solid transparent;
    border-bottom: 3px solid transparent;
}

/* 빨간 강조 상자 */
.red-box {
    position: absolute;
    left: 40px;
    top: 180px;
    width: 119px;
    height: 36px;
    box-sizing: border-box;
    border: 2.500px solid #f00;
}
```
